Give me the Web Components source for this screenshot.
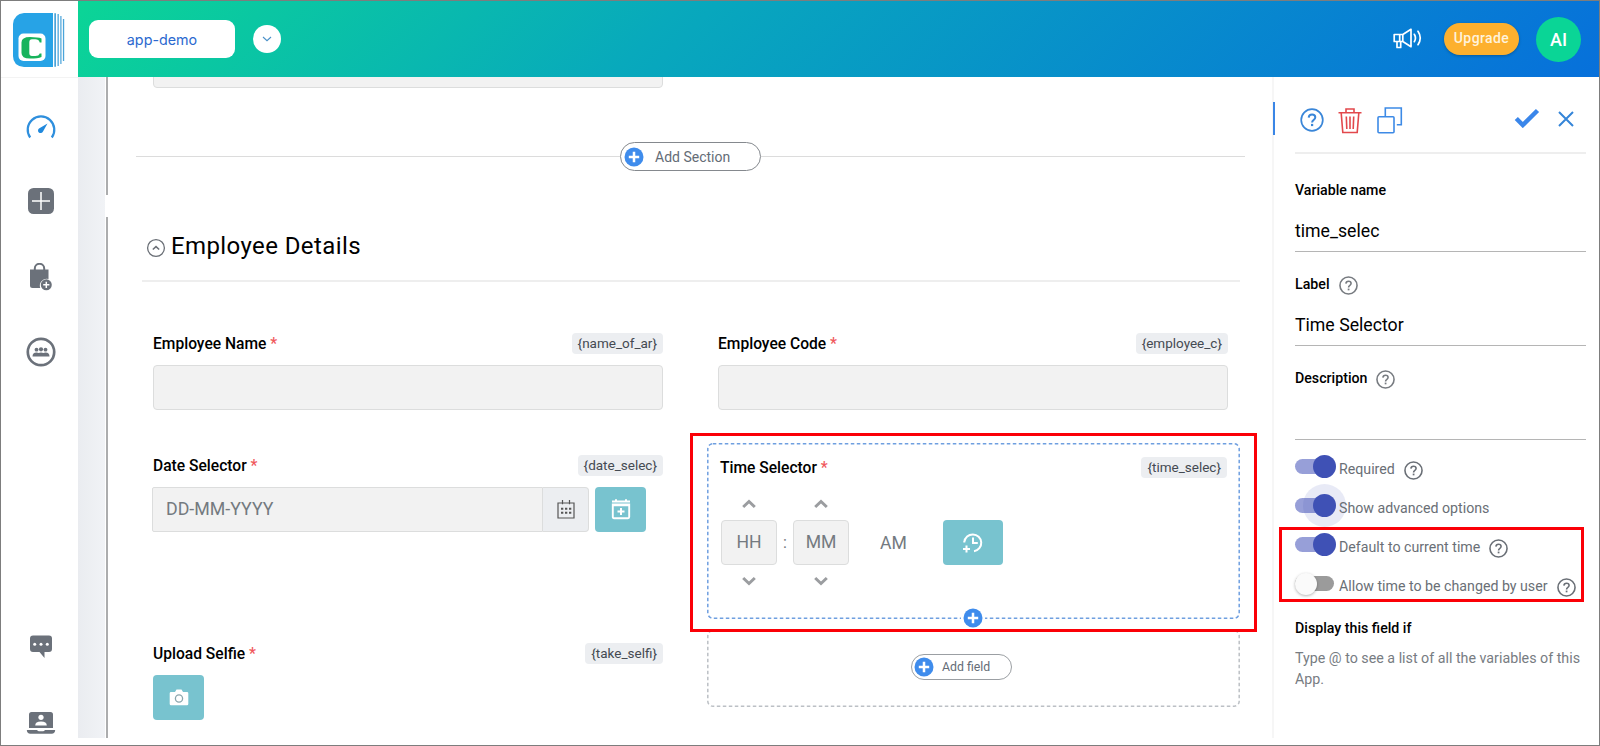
<!DOCTYPE html>
<html lang="en">
<head>
<meta charset="utf-8">
<title>app-demo</title>
<style>
  body { margin: 0; background: #fff; font-family: Roboto, "Noto Sans", sans-serif; color: #000; }
</style>
</head>
<body>
<app-shell>
  <side-nav slot="nav"></side-nav>
  <top-bar slot="header" app="app-demo" initials="AI"></top-bar>
  <form-canvas slot="main"></form-canvas>
  <props-panel slot="panel"></props-panel>
  <highlight-box slot="overlay" style="left:690px;top:433px;width:567px;height:199px"></highlight-box>
  <highlight-box slot="overlay" style="left:1279px;top:527px;width:305px;height:75px"></highlight-box>
</app-shell>

<script>
// ── Helper ───────────────────────────────────────────────────────────────────
function define(name, render, attrs = []) {
  customElements.define(name, class extends HTMLElement {
    constructor() {
      super();
      this.attachShadow({ mode: "open" });
    }
    connectedCallback() {
      const values = {};
      for (const a of attrs) values[a] = this.getAttribute(a) ?? "";
      this.shadowRoot.innerHTML = render(values, this);
    }
  });
}

// ── Icons ────────────────────────────────────────────────────────────────────
// name → [width, height, markup]
const ICONS = {
  logo: [52, 54, `
    <path d="M11 0h29v54H11Q0 53 0 43V11Q1 1 11 0z" fill="#27a3e6"/>
    <path d="M41.300 .2h1.700v53.600h-1.700zM44.500 1h1.300v52h-1.300zM47.300 3h1.200v48h-1.200zM49.900 6h1.300v42h-1.300z" fill="#4aa4da"/>
    <rect x="5.500" y="20.500" width="27" height="27.500" rx="5" fill="#fff"/>
    <path d="M28.500 29.500v-4Q25 24 17 24q-8.500 0-8.500 5.500v10.500q0 5.500 8.500 5.500 8 0 11.500-1.500v-3.500h-1.800q-.8 2.500-4.500 2.500H19q-2.700 0-2.700-3V29.500q0-3.200 2.700-3.200h3.200q3.700 0 4.500 3.200z" fill="#17b35c"/>`],
  gauge: [30, 26, `
    <path d="M4.200 23.500A13.300 13.300 0 1 1 25.800 23.500" fill="none" stroke="#2f8fdd" stroke-width="2.200"/>
    <path d="M21.500 9.500 17 17.500a2.600 2.600 0 1 1-3.600-3.300z" fill="#2089dd"/>`],
  plusbox: [26, 26, `
    <rect width="26" height="26" rx="5.500" fill="#6b717a"/>
    <path d="M13 4v18M4 13h18" stroke="#fff" stroke-width="1.500"/>`],
  bag: [24, 28, `
    <path d="M5.800 7V5.500a4.700 4.700 0 0 1 9.400 0V7" fill="none" stroke="#6b717a" stroke-width="2"/>
    <path d="M1 6.500h18.500V16a7 7 0 0 0-8.300 9H3.500Q1 25 1 22.500z" fill="#6b717a"/>
    <circle cx="17.300" cy="21.800" r="5.500" fill="#6b717a"/>
    <path d="M17.300 18.700v6.200M14.200 21.800h6.200" stroke="#fff" stroke-width="1.500"/>`],
  group: [30, 30, `
    <circle cx="15" cy="15" r="13.200" fill="none" stroke="#6b717a" stroke-width="2.700"/>
    <g fill="#6b717a"><circle cx="10.500" cy="12.700" r="1.900"/><circle cx="15" cy="12.300" r="2.100"/><circle cx="19.500" cy="12.700" r="1.900"/>
    <path d="M6.500 19.500q0-4 4-4 1.500 0 2 .6 2.500-1 5 0 .5-.6 2-.6 4 0 4 4z"/></g>`],
  chat: [24, 24, `
    <path d="M4 .5h16q3 0 3 3V14q0 3-3 3h-4.500v6L10.500 17H4q-3 0-3-3V3.500q0-3 3-3z" fill="#6b717a"/>
    <g fill="#fff"><circle cx="5.700" cy="9.200" r="1.500"/><circle cx="12" cy="9.200" r="1.500"/><circle cx="18.300" cy="9.200" r="1.500"/></g>`],
  laptop: [30, 24, `
    <path d="M5.500 1h19q2.500 0 2.500 2.500V17H3V3.500Q3 1 5.500 1z" fill="#6b717a"/>
    <circle cx="15" cy="6.300" r="2.600" fill="#fff"/>
    <path d="M9.200 14.500q0-4 5.800-4t5.800 4z" fill="#fff"/>
    <path d="M.8 19H11q1 1.200 2 1.200h4q1 0 2-1.200h10.200q-.3 3.800-3.500 3.800H4.300Q1.100 22.800.8 19z" fill="#6b717a"/>`],
  chevron: [10, 6, `<path d="M1 1l4 3.700L9 1" fill="none" stroke="#4a90c8" stroke-width="1.100"/>`],
  megaphone: [29, 21, `
    <g fill="none" stroke="#fff" stroke-width="1.700" stroke-linejoin="round" stroke-linecap="round">
    <path d="M1.200 6.500h8.600v7H1.200zM9.800 6.500 18 1.300v17.400l-8.200-5.200M4 13.500v6h3.700v-6M6.700 6.500v7"/>
    <path d="M21.300 6.300q2.300 3.700 0 7.400M25 3.300q4.500 6.700 0 13.400"/></g>`],
  collapse: [20, 20, `
    <circle cx="10" cy="10" r="8.400" fill="none" stroke="#6a6f76" stroke-width="1.300"/>
    <path d="M6.800 11.500 10 8.600l3.200 2.900" fill="none" stroke="#6a6f76" stroke-width="1.500"/>`],
  plus: [20, 20, `
    <circle cx="10" cy="10" r="9.500" fill="#3f8cec"/>
    <path d="M10 4.800v10.400M4.800 10h10.400" stroke="#fff" stroke-width="2.500"/>`],
  calendar: [18, 19, `
    <path d="M1 3h16v15H1zM5.500 0v4.200M12.500 0v4.200" fill="none" stroke="#555" stroke-width="1.200"/>
    <path d="M4 8.800h10.500M4 12.800h10.500" stroke="#555" stroke-width="2" stroke-dasharray="2.300 1.700"/>`],
  calplus: [20, 21, `
    <path d="M1 2.500h18M5 .3v3M15 .3v3" stroke="#fff" stroke-width="2" fill="none"/>
    <path d="M1.800 5.500h16.400v12.500q0 1.200-1.200 1.200H3q-1.200 0-1.200-1.200z" fill="none" stroke="#fff" stroke-width="1.900"/>
    <path d="M1.500 6.200h17M10 9v7M6.500 12.500h7" stroke="#fff" stroke-width="2"/>`],
  camera: [20, 17, `
    <path d="M2 3h4l1.500-2.500h5L14 3h4q1.300 0 1.300 1.300V15q0 1.300-1.300 1.300H2Q.7 16.300.7 15V4.300Q.7 3 2 3z" fill="#fff"/>
    <circle cx="10" cy="9.500" r="3.600" fill="#fff" stroke="#8ba6ad" stroke-width="1.300"/>`],
  history: [22, 22, `
    <g fill="none" stroke="#fff" stroke-width="2">
    <path d="M2.300 10A8.500 8.500 0 1 1 12 19.300M2.300 10.500V9"/>
    <path d="M11 5.500V11h4.800M4.500 13.500v7M1 17h7"/></g>`],
  up: [16, 11, `<path d="M2.200 9 8 3.500 13.800 9" fill="none" stroke="#9b9da0" stroke-width="3"/>`],
  down: [16, 11, `<path d="M2.200 2 8 7.500 13.800 2" fill="none" stroke="#9b9da0" stroke-width="3"/>`],
  help: [24, 24, `
    <circle cx="12" cy="12" r="10.800" fill="none" stroke="currentColor" stroke-width="var(--help-stroke, 2)"/>
    <path d="M8.700 9.600q.2-3 3.400-3 3.100 0 3.200 2.700 0 1.700-1.800 2.800-1.400.9-1.400 2.400" fill="none" stroke="currentColor" stroke-width="2"/>
    <rect x="11" y="15.900" width="2.200" height="2.200" fill="currentColor"/>`],
  trash: [24, 27, `
    <g fill="none" stroke="#e2484c" stroke-width="1.600">
    <path d="M.5 5.800h23M8 5.500V2h8v3.500M3.200 6l1.600 19.500h14.400L20.800 6"/>
    <path d="M8.300 9.500l.5 12.500M12 9.500V22M15.700 9.500 15.200 22"/></g>`],
  copy: [26, 27, `
    <g fill="none" stroke="#3d8ae6" stroke-width="1.600">
    <rect x="1" y="9.800" width="16" height="16" rx="1"/>
    <path d="M8.300 9.500V1h16v16.700h-4.500"/></g>`],
  check: [26, 20, `<path d="M2.300 10.500 8.800 17 23.500 2.500" fill="none" stroke="#3a86ea" stroke-width="4.500"/>`],
  close: [16, 16, `<path d="M1 1l14 14M15 1 1 15" stroke="#3585d8" stroke-width="2"/>`],
};

define("ui-icon", ({ name, size }) => {
  const [w, h, body] = ICONS[name];
  const k = size ? size / w : 1;
  return `
    <style>:host { display: inline-flex; flex: none; } svg { display: block; }</style>
    <svg width="${w * k}" height="${h * k}" viewBox="0 0 ${w} ${h}">${body}</svg>`;
}, ["name", "size"]);

// ── Shell ────────────────────────────────────────────────────────────────────
define("app-shell", () => `
  <style>
    :host {
      display: grid; position: relative; box-sizing: border-box;
      grid-template: 76px 1fr / 77px 1194px 1fr;
      width: 1600px; height: 746px; border: 1px solid #7d7d7d; overflow: hidden;
    }
    .nav { grid-row: 1 / 3; }
    .head { grid-column: 2 / 4; }
    div { min-width: 0; min-height: 0; display: grid; }
  </style>
  <div class="nav"><slot name="nav"></slot></div>
  <div class="head"><slot name="header"></slot></div>
  <div><slot name="main"></slot></div>
  <div><slot name="panel"></slot></div>
  <slot name="overlay"></slot>`);

define("highlight-box", () => `
  <style>:host { position: absolute; box-sizing: border-box; border: 3px solid #fb0007; margin: -1px; }</style>`);

define("side-nav", () => `
  <style>
    :host { display: flex; flex-direction: column; align-items: center; padding-bottom: 10px; }
    .logo { box-sizing: border-box; height: 77px; width: 100%; padding: 12px 0 0 12px; border-bottom: 1px solid #f3f3f3; }
    ui-icon { margin-left: 3px; }
    .logo ui-icon { margin-left: 0; }
    nav { display: flex; flex-direction: column; align-items: center; }
    .top { padding-top: 36px; }
    .bottom { margin-top: auto; gap: 52px; }
    .plus { margin-top: 48px; } .bag { margin-top: 49px; } .group { margin-top: 46px; }
  </style>
  <div class="logo"><ui-icon name="logo"></ui-icon></div>
  <nav class="top">
    <ui-icon name="gauge"></ui-icon>
    <ui-icon class="plus" name="plusbox"></ui-icon>
    <ui-icon class="bag" name="bag"></ui-icon>
    <ui-icon class="group" name="group"></ui-icon>
  </nav>
  <nav class="bottom">
    <ui-icon name="chat"></ui-icon>
    <ui-icon name="laptop"></ui-icon>
  </nav>`);

define("top-bar", ({ app, initials }) => `
  <style>
    :host {
      display: flex; align-items: center; box-sizing: border-box; height: 76px; padding: 0 18px 0 11px;
      background: linear-gradient(135deg, #0bd596 0%, #08a9bc 38%, #0770db 100%);
    }
    .app {
      width: 146px; height: 38px; margin-top: -1px; border-radius: 9px; background: #fff; color: #2b69cf;
      font: 14.300px/39px Inter, sans-serif; text-align: center;
    }
    .drop { display: flex; align-items: center; justify-content: center; width: 28px; height: 28px; margin: -1px 0 0 17.500px; border-radius: 50%; background: #fff; }
    ui-icon.mega { margin-left: auto; margin-top: -2px; }
    .up {
      width: 75px; height: 32px; margin-left: 22px; border-radius: 16px; background: #fdb02e; color: #fff3dc;
      font: 500 14px/31px Roboto, sans-serif; letter-spacing: .4px; text-align: center; box-shadow: 0 1px 3px rgba(0, 0, 0, .25);
    }
    .me {
      width: 45px; height: 45px; margin-left: 17px; border-radius: 50%; background: #0ad596; color: #fff;
      font: 500 18px/45px Roboto, sans-serif; text-align: center;
    }
  </style>
  <div class="app">${app}</div>
  <div class="drop"><ui-icon name="chevron"></ui-icon></div>
  <ui-icon class="mega" name="megaphone"></ui-icon>
  <div class="up">Upgrade</div>
  <div class="me">${initials}</div>`, ["app", "initials"]);

// ── Form pieces ──────────────────────────────────────────────────────────────
define("add-pill", () => `
  <style>
    :host {
      display: flex; align-items: center; box-sizing: border-box; flex: none;
      width: 141px; height: 29px; padding-left: 3px; gap: 11px;
      border: 1.500px solid #85898e; border-radius: 15px; background: #fff; color: #646c76; font-size: 14px;
    }
    :host([small]) { width: 101px; height: 26px; padding-left: 2px; gap: 8px; font-size: 12.300px; border-color: #9b9fa3; }
  </style>
  <ui-icon name="plus"></ui-icon><slot></slot>`);

define("form-field", ({ label, variable }) => `
  <style>
    :host { display: block; }
    .row { display: flex; justify-content: space-between; height: 21px; margin-bottom: 11px; }
    label { font: 500 15.600px/23px Roboto, sans-serif; white-space: nowrap; }
    i { color: #f0585c; font-style: normal; }
    code { height: 21px; padding: 0 6px; border-radius: 4px; background: #eceef1; color: #444a52; font: 13.500px/20px Roboto, sans-serif; }
  </style>
  <div class="row"><label>${label} <i>*</i></label><code>${variable}</code></div>
  <slot></slot>`, ["label", "variable"]);

define("text-box", () => `
  <style>
    :host {
      display: block; box-sizing: border-box; height: 44.500px; border: 1.500px solid #dcdddd; border-radius: 4px;
      background: #f2f2f2; color: #747a80; font-size: 17.600px; line-height: 42px;
    }
  </style>
  <slot></slot>`);

define("icon-button", ({ icon, width }) => `
  <style>
    :host {
      display: flex; align-items: center; justify-content: center; flex: none; width: ${width}px; height: 45px;
      border-radius: 4px; background: #78c3cf;
    }
  </style>
  <ui-icon name="${icon}"></ui-icon>`, ["icon", "width"]);

define("date-picker", () => `
  <style>
    :host { display: flex; margin-left: -1px; }
    text-box { width: 391px; padding-left: 13px; border-radius: 2px 0 0 2px; font-size: 17.800px; }
    .addon {
      display: flex; align-items: center; justify-content: center; box-sizing: border-box;
      width: 46px; height: 44.500px; border: 1.500px solid #dcdddd; border-left: 0;
      border-radius: 0 4px 4px 0; background: #eceef1; margin-right: 6px;
    }
  </style>
  <text-box>DD-MM-YYYY</text-box>
  <div class="addon"><ui-icon name="calendar"></ui-icon></div>
  <icon-button icon="calplus" width="51"></icon-button>`);

define("time-picker", () => `
  <style>
    :host { display: flex; align-items: center; color: #747a80; font-size: 17.600px; }
    .spin { display: flex; flex-direction: column; align-items: center; gap: 11px; }
    text-box { width: 56px; text-align: center; }
    .colon { width: 16px; text-align: center; font-size: 16px; }
    .ampm { margin: 0 36px 0 31px; }
  </style>
  <div class="spin"><ui-icon name="up"></ui-icon><text-box>HH</text-box><ui-icon name="down"></ui-icon></div>
  <span class="colon">:</span>
  <div class="spin"><ui-icon name="up"></ui-icon><text-box>MM</text-box><ui-icon name="down"></ui-icon></div>
  <span class="ampm">AM</span>
  <icon-button icon="history" width="60"></icon-button>`);

define("dashed-zone", ({ color }) => `
  <style>
    :host { display: block; position: relative; box-sizing: border-box; margin: 0 -12px 0 -11px; }
    svg { position: absolute; inset: 0; width: 100%; height: 100%; }
    rect { x: .8px; y: .8px; width: calc(100% - 1.600px); height: calc(100% - 1.600px); rx: 5px; fill: none; stroke-width: 1.500; stroke-dasharray: 3.500 2.500; }
    .body { position: relative; }
  </style>
  <svg><rect stroke="${color}"/></svg>
  <div class="body"><slot></slot></div>
  <slot name="handle"></slot>`, ["color"]);

define("form-canvas", () => `
  <style>
    :host { display: flex; flex-direction: column; gap: 22px; box-sizing: border-box; padding-left: 28px; height: 661px; background: linear-gradient(90deg, #eaecf0 0, #f1f3f6 27.500px, #fff 27.500px); }
    section { box-sizing: border-box; border-left: 2px solid #acadae; overflow: hidden; }
    .prev { height: 118px; flex: none; }
    .clip { height: 11px; overflow: hidden; display: flex; align-items: flex-end; margin: 0 0 54px 45px; width: 510px; }
    .clip text-box { width: 100%; }
    .add { display: flex; align-items: center; margin: 0 27px 0 28px; }
    .add::before, .add::after { content: ""; flex: 1; height: 1.500px; background: #dcdcdc; }
    .cur { flex: 1; padding-left: 34px; }
    h2 { display: flex; align-items: center; gap: 5px; margin: 14px 0 0 4px; height: 30px; font: 400 24px/30px Roboto, sans-serif; letter-spacing: .4px; }
    h2 ui-icon { margin-top: 3px; }
    hr { margin: 19px 32px 0 0; border: 0; height: 2px; background: #eee; }
    .cols { display: grid; grid-template-columns: 510px 510px; column-gap: 55px; margin: 51px 0 0 11px; }
    .col { display: flex; flex-direction: column; min-width: 0; }
    .date { margin-top: 45.500px; }
    .selfie { margin-top: 110.500px; }
    .time { height: 176px; margin-top: 33.500px; }
    .time form-field { padding: 14px 13px 0 13px; }
    time-picker { margin: 20px 0 0 1px; height: 89px; }
    .handle { position: absolute; left: 254px; top: 165px; width: 24px; display: flex; justify-content: center; background: #fff; }
    .drop { height: 77px; margin-top: 10.500px; }
    .drop add-pill { margin: 24px auto 0; position: relative; left: -12px; }
  </style>
  <section class="prev">
    <div class="clip"><text-box></text-box></div>
    <div class="add"><add-pill>Add Section</add-pill></div>
  </section>
  <section class="cur">
    <h2><ui-icon name="collapse"></ui-icon>Employee Details</h2>
    <hr>
    <div class="cols">
      <div class="col">
        <form-field label="Employee Name" variable="{name_of_ar}"><text-box></text-box></form-field>
        <form-field class="date" label="Date Selector" variable="{date_selec}"><date-picker></date-picker></form-field>
        <form-field class="selfie" label="Upload Selfie" variable="{take_selfi}"><icon-button icon="camera" width="51"></icon-button></form-field>
      </div>
      <div class="col">
        <form-field label="Employee Code" variable="{employee_c}"><text-box></text-box></form-field>
        <dashed-zone class="time" color="#6f9fe0">
          <form-field label="Time Selector" variable="{time_selec}"><time-picker></time-picker></form-field>
          <span class="handle" slot="handle"><ui-icon name="plus"></ui-icon></span>
        </dashed-zone>
        <dashed-zone class="drop" color="#bcc0c5"><add-pill small>Add field</add-pill></dashed-zone>
      </div>
    </div>
  </section>`);

// ── Properties panel ─────────────────────────────────────────────────────────
define("prop-input", ({ label, value, help }) => `
  <style>
    :host { display: block; height: 94px; }
    .label { display: flex; height: 20px; gap: 9px; font: 500 14.200px/20px Roboto, sans-serif; }
    ui-icon { margin-top: 2px; color: #777b80; }
    .value { box-sizing: border-box; height: 49px; padding-top: 17px; margin-top: 3px; border-bottom: 1.500px solid #b5b5b5; font-size: 17.700px; line-height: 23px; }
  </style>
  <div class="label"><span>${label}</span>${help ? '<ui-icon name="help" size="19"></ui-icon>' : ""}</div>
  <div class="value">${value}</div>`, ["label", "value", "help"]);

define("toggle-row", ({ label, help }, host) => `
  <style>
    :host { display: flex; height: 39px; align-items: flex-start; color: #6a6f76; font-size: 14.200px; }
    .track { display: flex; align-items: center; width: 39px; height: 15px; margin: 5px 5px 0 0; border-radius: 8px; background: #9b9b9b; }
    .thumb { width: 22px; height: 22px; flex: none; border-radius: 50%; background: #fafafa; box-shadow: 0 1px 3px rgba(0, 0, 0, .3); }
    .on .thumb { margin-left: 18px; width: 23px; height: 23px; background: #3f51b5; box-shadow: none; }
    .track.on { background: #979fd8; }
    .focus .thumb { box-shadow: 0 0 0 10px rgba(63, 81, 181, .12); }
    span { line-height: 20px; margin-top: 5px; white-space: nowrap; }
    ui-icon { margin: 7px 0 0 9px; }
  </style>
  <div class="track ${host.hasAttribute("on") ? "on" : ""} ${host.hasAttribute("focused") ? "focus" : ""}"><div class="thumb"></div></div>
  <span>${label}</span>${help ? '<ui-icon name="help" size="19"></ui-icon>' : ""}`, ["label", "help"]);

define("props-panel", () => `
  <style>
    :host { display: block; box-sizing: border-box; height: 661px; border-left: 2px solid #f6f6f6; padding: 0 13px 0 21px; }
    .tools { position: relative; display: flex; align-items: flex-start; box-sizing: border-box; height: 77px; padding: 30px 12px 0 5px; border-bottom: 2px solid #eee; }
    .bar { position: absolute; left: -22px; top: 25px; width: 2px; height: 33px; background: #3a86e6; }
    .q { color: #3a86d8; --help-stroke: 1.700; margin: 1px 14px 0 0; }
    .copy { margin-left: 15px; }
    .check { margin: 1px 18px 0 auto; }
    .close { margin-top: 4px; }
    .fields { padding-top: 26px; height: 274px; }
    h4 { margin: 8px 0 9.500px; font: 500 14.200px/20px Roboto, sans-serif; }
    p { margin: 0; color: #777c82; font-size: 14.250px; line-height: 21.500px; }
  </style>
  <div class="tools">
    <span class="bar"></span>
    <ui-icon class="q" name="help" size="24"></ui-icon>
    <ui-icon name="trash"></ui-icon>
    <ui-icon class="copy" name="copy"></ui-icon>
    <ui-icon class="check" name="check"></ui-icon>
    <ui-icon class="close" name="close"></ui-icon>
  </div>
  <div class="fields">
    <prop-input label="Variable name" value="time_selec"></prop-input>
    <prop-input label="Label" value="Time Selector" help="1"></prop-input>
    <prop-input label="Description" value="" help="1"></prop-input>
  </div>
  <div>
    <toggle-row on label="Required" help="1"></toggle-row>
    <toggle-row on focused label="Show advanced options"></toggle-row>
    <toggle-row on label="Default to current time" help="1"></toggle-row>
    <toggle-row label="Allow time to be changed by user" help="1"></toggle-row>
  </div>
  <h4>Display this field if</h4>
  <p>Type @ to see a list of all the variables of this App.</p>`);
</script>
</body>
</html>
